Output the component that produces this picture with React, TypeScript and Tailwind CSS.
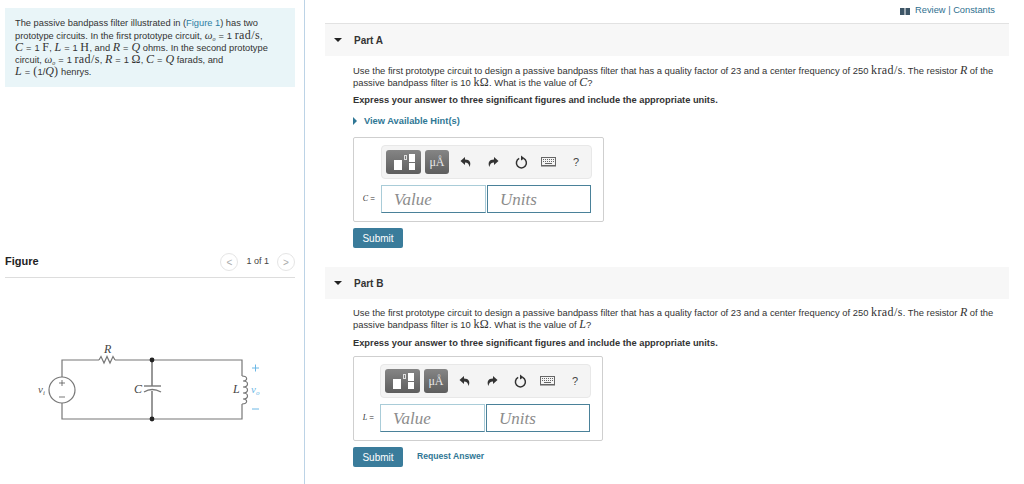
import React from "react";

const M = ({ children }: { children: React.ReactNode }) => (
  <span className="font-['Liberation_Serif',serif] italic text-[12px] leading-none text-[#333]">{children}</span>
);
const R = ({ children }: { children: React.ReactNode }) => (
  <span className="font-['Liberation_Serif',serif] text-[12px] tracking-[0.4px] leading-none text-[#333]">{children}</span>
);
const Eq = () => <span className="mx-[3px] text-[#333]">=</span>;
const Omega = () => (
  <span className="font-['Liberation_Serif',serif] italic text-[11px] leading-none text-[#333]">
    ω<span className="relative top-[2px] text-[6px] leading-none">o</span>
  </span>
);

const Line = ({ children }: { children: React.ReactNode }) => (
  <div className="h-[12px] whitespace-nowrap leading-[12px]">{children}</div>
);

function Undo() {
  return (
    <svg width="12" height="12" viewBox="0 0 12 12" className="fill-[#333]">
      <path d="M5 1 L0.5 5 L5 9 V6.4 C7.6 6.4 9 7.6 9.6 11 C11.4 7 10 3.6 5 3.6 Z" />
    </svg>
  );
}
function Redo() {
  return (
    <svg width="12" height="12" viewBox="0 0 12 12" className="fill-[#333]">
      <path d="M7 1 L11.5 5 L7 9 V6.4 C4.4 6.4 3 7.6 2.4 11 C0.6 7 2 3.6 7 3.6 Z" />
    </svg>
  );
}
function Reset() {
  return (
    <svg width="13" height="14" viewBox="0 0 13 14" fill="none">
      <path d="M8.6 3.4 A5 5 0 1 1 4.2 3.4" stroke="#333" strokeWidth="1.5" />
      <path d="M6 0.6 L9.6 3.2 L6 5.6 Z" fill="#333" />
    </svg>
  );
}
function Keyboard() {
  return (
    <svg width="15" height="10" viewBox="0 0 15 10">
      <rect x="0.5" y="0.5" width="14" height="8" fill="#f4f4f4" stroke="#666" />
      <path d="M2 2.5h11M2 4.5h11" stroke="#666" strokeWidth="1" strokeDasharray="1 1" />
      <path d="M4 6.5h7" stroke="#666" strokeWidth="1" />
      <path d="M0 9.5h15" stroke="#aaa" />
    </svg>
  );
}

function AnswerBox({ label, offset, inset, labelW }: { label: string; offset: string; inset: string; labelW: string }) {
  return (
    <div className={`h-[85px] rounded-[2px] border border-[#cfcfcf] bg-white pt-[7px] ${offset}`}>
      <div className={`flex h-[34px] w-[211px] items-center rounded-[4px] border border-[#e8e8e8] bg-[#f4f4f4] pl-[4px] ${inset}`}>
        <div className="flex h-[24px] w-[35px] items-center justify-center gap-[2px] rounded-[3px] bg-[linear-gradient(#858585,#5e5e5e)] pl-[1px]">
          <div className="mt-[6px] h-[10px] w-[8px] bg-white" />
          <div className="mb-[9px] h-[5px] w-[3px] border border-[#ddd]" />
          <div className="flex flex-col gap-[1px]">
            <div className="h-[8px] w-[6px] bg-white" />
            <div className="h-[7px] w-[6px] bg-white" />
          </div>
        </div>
        <div className="ml-[4px] flex h-[24px] w-[24px] items-center justify-center rounded-[3px] bg-[linear-gradient(#858585,#5e5e5e)] font-['Liberation_Serif',serif] text-[12px] leading-none text-[#e8e8e8]">
          μÅ
        </div>
        <div className="ml-[11px] flex w-[12px] justify-center"><Undo /></div>
        <div className="ml-[15px] flex w-[12px] justify-center"><Redo /></div>
        <div className="ml-[16px] flex w-[13px] justify-center"><Reset /></div>
        <div className="ml-[13px] flex w-[15px] justify-center"><Keyboard /></div>
        <div className="ml-[17px] font-['Liberation_Sans',sans-serif] text-[11px] leading-none text-[#444]">?</div>
      </div>
      <div className="mt-[6px] flex h-[28px] items-center">
        <div className={`pr-[6px] text-right font-['Liberation_Sans',sans-serif] text-[8px] text-[#333] ${labelW}`}>
          <span className="font-['Liberation_Serif',serif] italic">{label}</span> =
        </div>
        <div className="flex h-[28px] w-[105px] items-center border border-[#a9ccd8] border-b-[#4a8199] pl-[12px] pt-[1px] font-['Liberation_Serif',serif] text-[17px] italic text-[#8c8c8c]">
          Value
        </div>
        <div className="ml-px flex h-[28px] w-[104px] items-center border border-[#4a8199] pl-[12px] pt-[1px] font-['Liberation_Serif',serif] text-[17px] italic text-[#8c8c8c]">
          Units
        </div>
      </div>
    </div>
  );
}

function Caret() {
  return <div className="ml-[9px] h-0 w-0 border-x-[4px] border-t-[4px] border-x-transparent border-t-[#222]" />;
}

function PartBar({ title }: { title: string }) {
  return (
    <div className="flex h-[32px] items-center bg-[#f7f7f7]">
      <Caret />
      <div className="ml-[12px] text-[10px] font-bold text-[#333]">{title}</div>
    </div>
  );
}

function Question({ sym, offset }: { sym: string; offset: string }) {
  return (
    <div className={`ml-[28px] text-[9.38px] text-[#333] ${offset}`}>
      <Line>
        Use the first prototype circuit to design a passive bandpass filter that has a quality factor of 23 and a center frequency of 250 <R>krad/s</R>. The resistor <M>R</M> of the
      </Line>
      <Line>
        passive bandpass filter is 10 <R>kΩ</R>. What is the value of <M>{sym}</M>?
      </Line>
    </div>
  );
}

function Circuit() {
  return (
    <svg width="290" height="110" viewBox="0 0 290 110" className="mt-[61px]" fill="none">
      <g stroke="#777" strokeWidth="1.2">
        <path d="M57 38 V21 H94 M110 21 H237 V37 M237 65 V80 H57 V64" />
        <circle cx="57" cy="51" r="13" />
        <path d="M147 21 V47 M147 52 V80" strokeWidth="1.5" />
        <path d="M139 47 H156" strokeWidth="1.4" />
        <path d="M139 53 Q147 48 156 53" strokeWidth="1.4" />
        <path d="M94 21 L96 17.5 L99 24 L102 17.5 L105 24 L108 17.5 L110 21" />
        <path d="M237 37 C243 37 243 42 238 42 C244 42 244 48 238 48 C244 48 244 54 238 54 C244 54 244 60 238 60 C243 60 243 65 237 65" />
      </g>
      <circle cx="147" cy="21" r="2.4" fill="#222" />
      <circle cx="147" cy="80" r="2.4" fill="#222" />
      <path d="M54 44 h6 M57 41 v6 M54 58 h6" stroke="#555" strokeWidth="0.8" />
      <path d="M247 29 h7 M250.5 25.5 v7 M247 70 h7" stroke="#6cb8e6" strokeWidth="1" />
      <g fontFamily="Liberation Serif, serif" fontStyle="italic">
        <text x="99" y="14" fontSize="12" fill="#444">R</text>
        <text x="33" y="54" fontSize="11" fill="#555">v</text>
        <text x="38" y="56" fontSize="7" fill="#555">i</text>
        <text x="129" y="54" fontSize="12" fill="#444">C</text>
        <text x="228" y="54" fontSize="12" fill="#444">L</text>
        <text x="246" y="54" fontSize="11" fill="#6cb8e6">v</text>
        <text x="251" y="56" fontSize="7" fill="#6cb8e6">o</text>
      </g>
    </svg>
  );
}

export default function App() {
  return (
    <div className="flex h-[484px] w-[1024px] overflow-hidden bg-white font-['Liberation_Sans',sans-serif]">
      <div className="h-full w-[305px] shrink-0 border-r border-[#bcd3e6] pl-[5px] pr-[9px] pt-[8px]">
        <div className="h-[79px] bg-[#e9f5f8] pl-[10px] pr-[4px] pt-[9px] text-[9.3px] text-[#333]">
          <Line>The passive bandpass filter illustrated in (<span className="text-[#2f7ea3]">Figure 1</span>) has two</Line>
          <Line>prototype circuits. In the first prototype circuit, <Omega /><Eq />1 <R>rad/s</R>,</Line>
          <Line><M>C</M><Eq />1 <R>F</R>, <M>L</M><Eq />1 <R>H</R>, and <M>R</M><Eq /><M>Q</M> ohms. In the second prototype</Line>
          <Line>circuit, <Omega /><Eq />1 <R>rad/s</R>, <M>R</M><Eq />1 <R>Ω</R>, <M>C</M><Eq /><M>Q</M> farads, and</Line>
          <Line><M>L</M><Eq /><R>(</R>1/<M>Q</M><R>)</R> henrys.</Line>
        </div>
        <div className="mt-[166px] flex h-[25px] items-start justify-between border-b border-[#ddd]">
          <div className="mt-[1px] text-[11px] font-bold leading-[14px] text-[#222]">Figure</div>
          <div className="flex items-center text-[9px] text-[#444]">
            <div className="flex h-[18px] w-[18px] items-center justify-center rounded-full border border-[#e5e5e5] text-[10px] text-[#aaa]">&lt;</div>
            <div className="mx-[8px]">1 of 1</div>
            <div className="flex h-[18px] w-[18px] items-center justify-center rounded-full border border-[#e5e5e5] text-[10px] text-[#aaa]">&gt;</div>
          </div>
        </div>
        <Circuit />
      </div>

      <div className="min-w-0 flex-1 pl-[20px] pr-[15px]">
        <div className="flex h-[24px] items-center justify-end border-b border-[#e2e2e2] pb-[1px] pr-[14px] text-[9.3px] text-[#2f6f8f]">
          <svg width="10" height="7" viewBox="0 0 10 7" className="mr-[5px]">
            <rect x="0" y="0" width="4.5" height="7" fill="#3d5566" />
            <rect x="5.5" y="0" width="4.5" height="7" fill="#3d5566" />
          </svg>
          Review | Constants
        </div>

        <PartBar title="Part A" />
        <Question sym="C" offset="mt-[8px]" />
        <div className="ml-[28px] mt-[6px] text-[9.3px] font-bold leading-[12px] text-[#333]">
          Express your answer to three significant figures and include the appropriate units.
        </div>
        <div className="ml-[28px] mt-[9px] flex items-center text-[9.3px] font-bold leading-[12px] text-[#2f7795]">
          <div className="mr-[7px] h-0 w-0 border-y-[4px] border-l-[4px] border-y-transparent border-l-[#2f7795]" />
          View Available Hint(s)
        </div>
        <AnswerBox label="C" offset="ml-[28px] mt-[10px] w-[251px]" inset="ml-[27px]" labelW="w-[27px]" />
        <button className="ml-[28px] mt-[6px] block h-[20px] w-[50px] rounded-[2px] bg-[#3a7c9b] text-[10px] text-white">Submit</button>

        <div className="mt-[19px]">
          <PartBar title="Part B" />
        </div>
        <Question sym="L" offset="mt-[7px]" />
        <div className="ml-[28px] mt-[7px] text-[9.3px] font-bold leading-[12px] text-[#333]">
          Express your answer to three significant figures and include the appropriate units.
        </div>
        <AnswerBox label="L" offset="ml-[28px] mt-[7px] w-[250px]" inset="ml-[26px]" labelW="w-[26px]" />
        <div className="ml-[28px] mt-[6px] flex items-center">
          <button className="h-[20px] w-[50px] rounded-[2px] bg-[#3a7c9b] text-[10px] text-white">Submit</button>
          <div className="ml-[14px] pb-[2px] text-[8.6px] font-bold text-[#2f7795]">Request Answer</div>
        </div>
      </div>
    </div>
  );
}
